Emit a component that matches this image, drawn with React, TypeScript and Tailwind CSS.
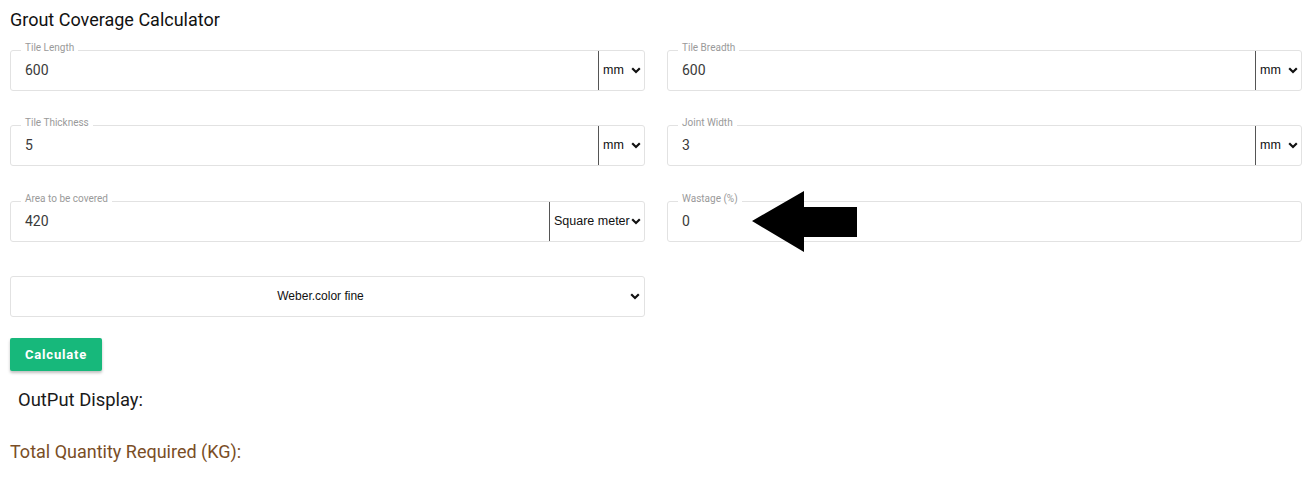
const Chevron = () => (
  <svg width="10" height="7" viewBox="0 0 10 7" className="shrink-0">
    <path d="M1.2 1.3 L5 5 L8.8 1.3" fill="none" stroke="#111" strokeWidth="2.2" />
  </svg>
);

type FieldProps = {
  label: string;
  value: string;
  unit?: string;
  unitWidth?: string;
};

const Field = ({ label, value, unit, unitWidth = "w-[46px]" }: FieldProps) => (
  <div className="relative flex h-[41px] rounded-[3px] border border-[#e2e2e2] bg-white">
    <span className="absolute -top-[9px] left-[10px] bg-white px-[4px] text-[10px] leading-[12px] text-[#9a9a9a]">
      {label}
    </span>
    <div className="flex flex-1 items-center pl-[14px] text-[14px] text-[#3a3a3a]">{value}</div>
    {unit && (
      <div
        className={`${unitWidth} flex items-center justify-between whitespace-nowrap border-l border-[#555] pl-[4px] pr-[3px] font-['Liberation_Sans',Arial,sans-serif] text-[12.5px] text-[#111]`}
      >
        <span>{unit}</span>
        <Chevron />
      </div>
    )}
  </div>
);

const App = () => {
  return (
    <div className="min-h-screen bg-white pl-[10px] pr-[11px] pt-[8px] font-['Roboto',sans-serif]">
      <h1 className="text-[18px] leading-[24px] text-[#111]">Grout Coverage Calculator</h1>

      <div className="mt-[18px] grid grid-cols-2 gap-x-[22px] gap-y-[34.3px]">
        <Field label="Tile Length" value="600" unit="mm" />
        <Field label="Tile Breadth" value="600" unit="mm" />
        <Field label="Tile Thickness" value="5" unit="mm" />
        <Field label="Joint Width" value="3" unit="mm" />
        <Field label="Area to be covered" value="420" unit="Square meter" unitWidth="w-[95px]" />
        <div className="relative">
          <Field label="Wastage (%)" value="0" />
          {/* pointer arrow */}
          <svg
            className="absolute left-[85px] top-[-10px]"
            width="106"
            height="62"
            viewBox="0 0 106 62"
          >
            <path d="M0 30 L52 0 L52 16 L105 16 L105 46 L52 46 L52 61 Z" fill="#000" />
          </svg>
        </div>
        <div className="relative flex h-[41px] items-center rounded-[3px] border border-[#e2e2e2] bg-white pr-[4px] font-['Liberation_Sans',Arial,sans-serif] text-[12px] text-[#111]">
          <span className="flex-1 text-center">Weber.color fine</span>
          <Chevron />
        </div>
      </div>

      <button className="mt-[21px] block h-[33px] w-[92px] rounded-[2px] bg-[#17b87b] text-[13px] font-bold tracking-[0.8px] text-white shadow-[0_2px_3px_rgba(0,0,0,0.25)]">
        Calculate
      </button>

      <div className="mt-[17px] pl-[8px] text-[18.4px] leading-[24px] text-[#1a1a1a]">OutPut Display:</div>

      <div className="mt-[28px] text-[18px] leading-[24px] text-[#7a4e26]">Total Quantity Required (KG):</div>
    </div>
  );
};

export default App;
